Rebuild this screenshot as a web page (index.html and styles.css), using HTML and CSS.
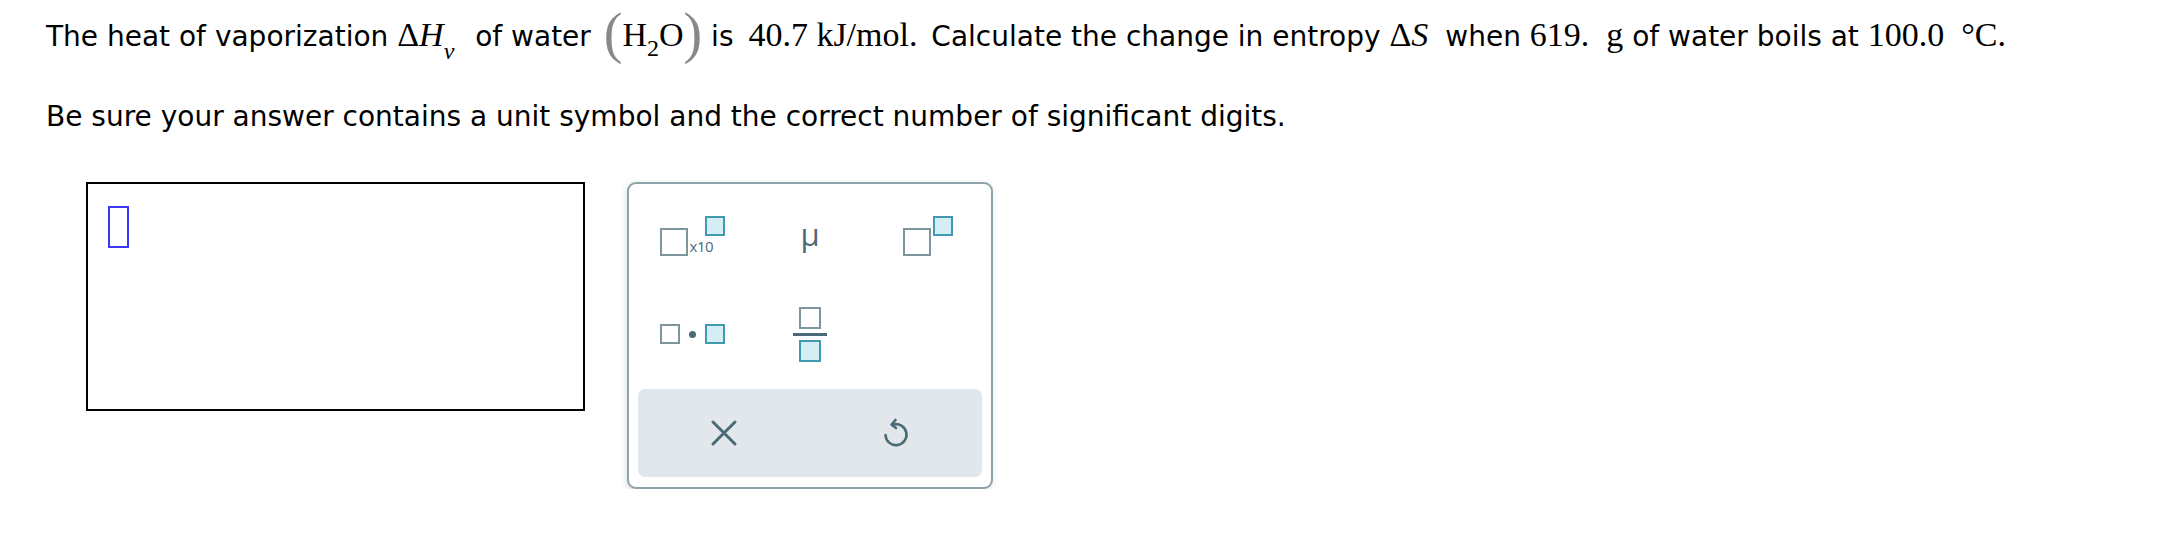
FILE: index.html
```html
<!DOCTYPE html>
<html lang="en">
<head>
<meta charset="utf-8">
<title>Entropy of vaporization</title>
<link rel="stylesheet" href="styles.css">
</head>
<body>
<div class="page">
  <p class="q">The heat of vaporization <span class="m m-first">Δ<i>H</i><i class="sub">v</i></span> of water <span class="m m-paren"><span class="paren">(</span>H<span class="sub2">2</span>O<span class="paren">)</span></span> is <span class="m m-gap">40.7 kJ/mol.</span> Calculate the change in entropy <span class="m m-s">Δ<i>S</i></span> when <span class="m">619.<span class="wide"> </span>g</span> of water boils at <span class="m">100.0<span class="wide"> </span>°C.</span></p>
  <p class="q q2">Be sure your answer contains a unit symbol and the correct number of significant digits.</p>

  <div class="work">
    <div class="answer"><div class="cursor"></div></div>

    <div class="keypad">
      <div class="keys">
        <div class="key">
          <div class="sci">
            <span class="sq-grey big"></span>
            <span class="x10">x10</span>
            <span class="sq-blue sup"></span>
          </div>
        </div>
        <div class="key"><span class="mu">μ</span></div>
        <div class="key">
          <div class="pow">
            <span class="sq-grey big"></span>
            <span class="sq-blue sup"></span>
          </div>
        </div>
        <div class="key">
          <div class="dot-group">
            <span class="sq-grey small"></span>
            <span class="dot"></span>
            <span class="sq-blue"></span>
          </div>
        </div>
        <div class="key">
          <div class="frac">
            <span class="sq-grey fr"></span>
            <span class="bar"></span>
            <span class="sq-blue fr"></span>
          </div>
        </div>
        <div class="key"></div>
      </div>
      <div class="actions">
        <div class="act">
          <svg width="28" height="28" viewBox="0 0 28 28" fill="none" stroke="#4b6a77" stroke-width="3" stroke-linecap="round">
            <path d="M3 3 L25 25 M25 3 L3 25"/>
          </svg>
        </div>
        <div class="act">
          <svg width="32" height="34" viewBox="0 0 32 34" fill="none" stroke="#4b6a77" stroke-width="2.6" stroke-linecap="round" stroke-linejoin="round">
            <path d="M5.5 19 A10.5 10.5 0 1 0 13 8.6"/>
            <path d="M15.5 4 L11.6 8.6 L16 12"/>
          </svg>
        </div>
      </div>
    </div>
  </div>
</div>
</body>
</html>
```

FILE: styles.css
```css
body {
  margin: 0;
  background: #fff;
  color: #000;
  font-family: "DejaVu Sans", Verdana, sans-serif;
}

.page {
  padding: 17px 0 0 46px;
}

.q {
  margin: 0;
  font-size: 28px;
  line-height: 40px;
  white-space: nowrap;
}

.q2 {
  margin-top: 40px;
}

.m {
  font-family: "Liberation Serif", "Times New Roman", serif;
  font-size: 34px;
  line-height: 34px;
}

.m i {
  font-style: italic;
}

.m-first {
  margin-right: 12px;
}

.m-paren {
  margin-left: 4px;
}

.m-gap {
  margin-left: 6px;
  margin-right: 5px;
}

.m-s {
  margin-right: 8px;
}

.wide {
  display: inline-block;
  width: 17px;
}

.sub {
  font-size: 24px;
  line-height: 0;
  vertical-align: -0.55em;
}

.sub2 {
  font-size: 24px;
  line-height: 0;
  vertical-align: -0.4em;
}

.paren {
  font-size: 56px;
  line-height: 0;
  color: #888;
  vertical-align: -6px;
}

.work {
  display: flex;
  align-items: flex-start;
  gap: 42px;
  margin: 45px 0 0 40px;
}

.answer {
  box-sizing: border-box;
  width: 499px;
  height: 229px;
  border: 2px solid #000;
  padding: 22px 0 0 20px;
}

.cursor {
  box-sizing: border-box;
  width: 21px;
  height: 42px;
  border: 2px solid #3a3af5;
}

.keypad {
  box-sizing: border-box;
  width: 366px;
  height: 307px;
  border: 2px solid #8ea2aa;
  border-radius: 9px;
  padding: 3px 9px 9px;
  box-shadow: -1px 2px 6px rgba(60, 80, 90, 0.18);
  background: #fff;
}

.keys {
  display: grid;
  grid-template-columns: repeat(3, 1fr);
  grid-auto-rows: 98px;
}

.key {
  display: flex;
  align-items: center;
  justify-content: center;
}

.sq-grey {
  box-sizing: border-box;
  display: block;
  border: 2px solid #7f959d;
  background: #fff;
}

.sq-blue {
  box-sizing: border-box;
  display: block;
  width: 20px;
  height: 20px;
  border: 2px solid #4199b2;
  background: #d5edf4;
}

.big {
  width: 28px;
  height: 28px;
}

.small {
  width: 20px;
  height: 20px;
}

.sci,
.pow {
  display: flex;
  align-items: flex-end;
  height: 40px;
}

.sci {
  margin-left: -6px;
}

.pow {
  margin-left: 6px;
}

.sup {
  align-self: flex-start;
}

.sci .sup {
  margin-left: -8px;
}

.pow .sup {
  margin-left: 2px;
}

.x10 {
  font-family: "Open Sans", "Liberation Sans", sans-serif;
  font-size: 15px;
  line-height: 15px;
  color: #4b6a77;
  margin: 0 0 2px 2px;
  letter-spacing: -0.5px;
}

.mu {
  font-family: "Open Sans", "Liberation Sans", sans-serif;
  font-size: 31px;
  line-height: 1;
  color: #4b6a77;
  margin-top: -4px;
}

.dot-group {
  display: flex;
  align-items: center;
  gap: 9px;
  margin-left: -6px;
}

.dot {
  display: block;
  width: 7px;
  height: 7px;
  border-radius: 50%;
  background: #4b6a77;
}

.frac {
  display: flex;
  flex-direction: column;
  align-items: center;
  gap: 4px;
}

.fr {
  width: 22px;
  height: 22px;
}

.bar {
  display: block;
  width: 34px;
  height: 3px;
  background: #4b6a77;
}

.actions {
  display: flex;
  margin-top: 6px;
  height: 88px;
  background: #e1e7ea;
  border-radius: 7px;
}

.act {
  flex: 1;
  display: flex;
  align-items: center;
  justify-content: center;
}
```
